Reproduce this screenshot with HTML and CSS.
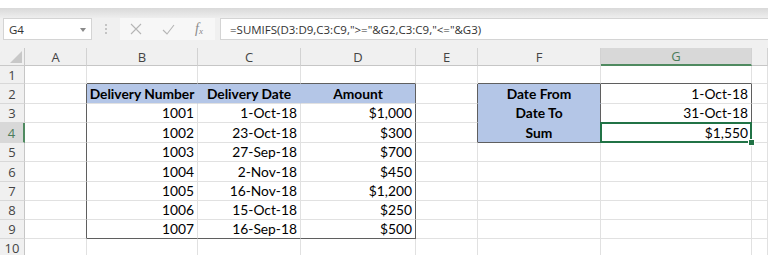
FILE: index.html
```html
<!DOCTYPE html>
<html lang="en">
<head>
    <meta charset="UTF-8">
    <meta name="viewport" content="width=device-width, initial-scale=1.0">
    <title>SUMIFS between dates</title>
    <link rel="stylesheet" href="styles.css">
</head>
<body>

<div class="ribbon-edge"></div>

<div class="formula-bar">
    <div class="name-box">
        <span>G4</span>
        <svg class="caret" width="6" height="4" viewBox="0 0 6 4"><path d="M0 0h6L3 4z" fill="#8a8a8a"/></svg>
    </div>
    <div class="grip">
        <i></i><i></i><i></i>
    </div>
    <div class="fx-buttons">
        <svg width="12" height="12" viewBox="0 0 12 12"><path d="M1 1L11 11M11 1L1 11" stroke="#b5b5b5" stroke-width="1.1" fill="none"/></svg>
        <svg width="13" height="11" viewBox="0 0 13 11"><path d="M1 6L5 10L12 1" stroke="#b5b5b5" stroke-width="1.1" fill="none"/></svg>
        <span class="fx">f<sub>x</sub></span>
    </div>
    <div class="formula">=SUMIFS(D3:D9,C3:C9,"&gt;="&amp;G2,C3:C9,"&lt;="&amp;G3)</div>
</div>

<div class="sheet">
    <!-- column headers -->
    <div class="c corner"><svg width="12" height="12" viewBox="0 0 12 12"><path d="M12 0V12H0z" fill="#c8c8c8"/></svg></div>
    <div class="c col">A</div>
    <div class="c col">B</div>
    <div class="c col">C</div>
    <div class="c col">D</div>
    <div class="c col">E</div>
    <div class="c col">F</div>
    <div class="c col col-active">G</div>
    <div class="c col"></div>

    <!-- row 1 -->
    <div class="c row">1</div>
    <div class="c"></div>
    <div class="c edge-b"></div>
    <div class="c edge-b"></div>
    <div class="c edge-b"></div>
    <div class="c"></div>
    <div class="c edge-b"></div>
    <div class="c edge-b"></div>
    <div class="c"></div>

    <!-- row 2 -->
    <div class="c row">2</div>
    <div class="c edge-r"></div>
    <div class="c head fill-r">Delivery Number</div>
    <div class="c head fill-r">Delivery Date</div>
    <div class="c head edge-r">Amount</div>
    <div class="c edge-r"></div>
    <div class="c head fill-b edge-r">Date From</div>
    <div class="c num edge-r">1-Oct-18</div>
    <div class="c"></div>

    <!-- row 3 -->
    <div class="c row">3</div>
    <div class="c edge-r"></div>
    <div class="c num">1001</div>
    <div class="c num">1-Oct-18</div>
    <div class="c num edge-r">$1,000</div>
    <div class="c edge-r"></div>
    <div class="c head fill-b edge-r">Date To</div>
    <div class="c num edge-r">31-Oct-18</div>
    <div class="c"></div>

    <!-- row 4 -->
    <div class="c row row-active">4</div>
    <div class="c edge-r"></div>
    <div class="c num">1002</div>
    <div class="c num">23-Oct-18</div>
    <div class="c num edge-r">$300</div>
    <div class="c edge-r"></div>
    <div class="c head edge-r edge-b">Sum</div>
    <div class="c num edge-r edge-b selected">$1,550</div>
    <div class="c"></div>

    <!-- row 5 -->
    <div class="c row">5</div>
    <div class="c edge-r"></div>
    <div class="c num">1003</div>
    <div class="c num">27-Sep-18</div>
    <div class="c num edge-r">$700</div>
    <div class="c"></div>
    <div class="c"></div>
    <div class="c"></div>
    <div class="c"></div>

    <!-- row 6 -->
    <div class="c row">6</div>
    <div class="c edge-r"></div>
    <div class="c num">1004</div>
    <div class="c num">2-Nov-18</div>
    <div class="c num edge-r">$450</div>
    <div class="c"></div>
    <div class="c"></div>
    <div class="c"></div>
    <div class="c"></div>

    <!-- row 7 -->
    <div class="c row">7</div>
    <div class="c edge-r"></div>
    <div class="c num">1005</div>
    <div class="c num">16-Nov-18</div>
    <div class="c num edge-r">$1,200</div>
    <div class="c"></div>
    <div class="c"></div>
    <div class="c"></div>
    <div class="c"></div>

    <!-- row 8 -->
    <div class="c row">8</div>
    <div class="c edge-r"></div>
    <div class="c num">1006</div>
    <div class="c num">15-Oct-18</div>
    <div class="c num edge-r">$250</div>
    <div class="c"></div>
    <div class="c"></div>
    <div class="c"></div>
    <div class="c"></div>

    <!-- row 9 -->
    <div class="c row">9</div>
    <div class="c edge-r"></div>
    <div class="c num edge-b">1007</div>
    <div class="c num edge-b">16-Sep-18</div>
    <div class="c num edge-r edge-b">$500</div>
    <div class="c"></div>
    <div class="c"></div>
    <div class="c"></div>
    <div class="c"></div>

    <!-- row 10 -->
    <div class="c row">10</div>
    <div class="c"></div>
    <div class="c"></div>
    <div class="c"></div>
    <div class="c"></div>
    <div class="c"></div>
    <div class="c"></div>
    <div class="c"></div>
    <div class="c"></div>
</div>

</body>
</html>
```

FILE: styles.css
```css
body {
    margin: 0;
    background-color: #fff;
    font-family: Lato, "Open Sans", sans-serif;
    color: #000;
    overflow: hidden;
}
.ribbon-edge {
    height: 10px;
    margin-top: 8px;
    background: linear-gradient(#d9d9d9, #eeeeee);
}
.formula-bar {
    display: flex;
    align-items: stretch;
    height: 22px;
    padding-bottom: 8px;
    background-color: #f0f0f0;
    font-family: "Open Sans", sans-serif;
    font-size: 11.5px;
    color: #333;
}
.name-box {
    display: flex;
    align-items: center;
    justify-content: space-between;
    width: 89px;
    margin-left: 3px;
    padding: 0 5px;
    box-sizing: border-box;
    background-color: #fff;
    border: 1px solid #d4d4d4;
}
.caret {
    margin-top: 1px;
}
.grip {
    display: flex;
    flex-direction: column;
    justify-content: center;
    gap: 2px;
    width: 28px;
    align-items: center;
}
.grip i {
    display: block;
    width: 2px;
    height: 2px;
    background-color: #c4c4c4;
}
.fx-buttons {
    display: flex;
    align-items: center;
    width: 95px;
    padding-left: 10px;
    gap: 20px;
    box-sizing: border-box;
    background-color: #f7f7f7;
}
.fx {
    font-family: "Liberation Serif", serif;
    font-style: italic;
    font-size: 14px;
    color: #8a8a8a;
}
.fx sub {
    font-size: 9px;
    vertical-align: -1px;
}
.formula {
    flex: 1;
    display: flex;
    align-items: center;
    margin-left: 5px;
    padding-left: 9px;
    background-color: #fff;
    border: 1px solid #d4d4d4;
    border-right: none;
    white-space: nowrap;
}
.sheet {
    display: grid;
    grid-template-columns: 25px 62px 111px 103px 115px 62px 123px 151px 1fr;
    grid-template-rows: 18px 18px 20px 19px 20px 19px 20px 19px 19px 19px 19px;
}
.c {
    display: flex;
    align-items: flex-end;
    padding: 0 3px 1px;
    box-sizing: border-box;
    border-right: 1px solid #e1e1e1;
    border-bottom: 1px solid #e1e1e1;
    font-size: 13.8px;
    line-height: 16px;
    white-space: nowrap;
    overflow: hidden;
}
.corner {
    align-items: flex-end;
    justify-content: flex-end;
    padding: 0 2px 2px 0;
    background-color: #f0f0f0;
    border-right-color: #c9c9c9;
    border-bottom-color: #c9c9c9;
}
.col, .row {
    justify-content: center;
    align-items: center;
    padding: 0;
    background-color: #f0f0f0;
    font-family: "Open Sans", sans-serif;
    font-size: 13px;
    color: #444;
}
.col {
    border-right-color: #d2d2d2;
    border-bottom-color: #c6c6c6;
}
.row {
    border-right-color: #c6c6c6;
    border-bottom-color: #d8d8d8;
}
.col-active {
    background-color: #d8d8d8;
    border-bottom: 2px solid #4f8a60;
    color: #4c7c5a;
}
.row-active {
    background-color: #d8d8d8;
    border-right: 2px solid #4f8a60;
    color: #4c7c5a;
}
.head {
    justify-content: center;
    background-color: #b4c6e7;
    font-weight: bold;
}
.num {
    justify-content: flex-end;
}
.fill-r {
    border-right-color: #b4c6e7;
}
.fill-b {
    border-bottom-color: #b4c6e7;
}
.edge-r {
    border-right-color: #5f5f5f;
}
.edge-b {
    border-bottom-color: #5f5f5f;
}
.selected {
    position: relative;
    overflow: visible;
}
.selected::after {
    content: "";
    position: absolute;
    left: -1px;
    top: -1px;
    right: -1px;
    bottom: -1px;
    border: 2px solid #217346;
}
.selected::before {
    content: "";
    position: absolute;
    right: -4px;
    bottom: -4px;
    width: 5px;
    height: 5px;
    background-color: #217346;
    border: 1px solid #fff;
    z-index: 1;
}
```
